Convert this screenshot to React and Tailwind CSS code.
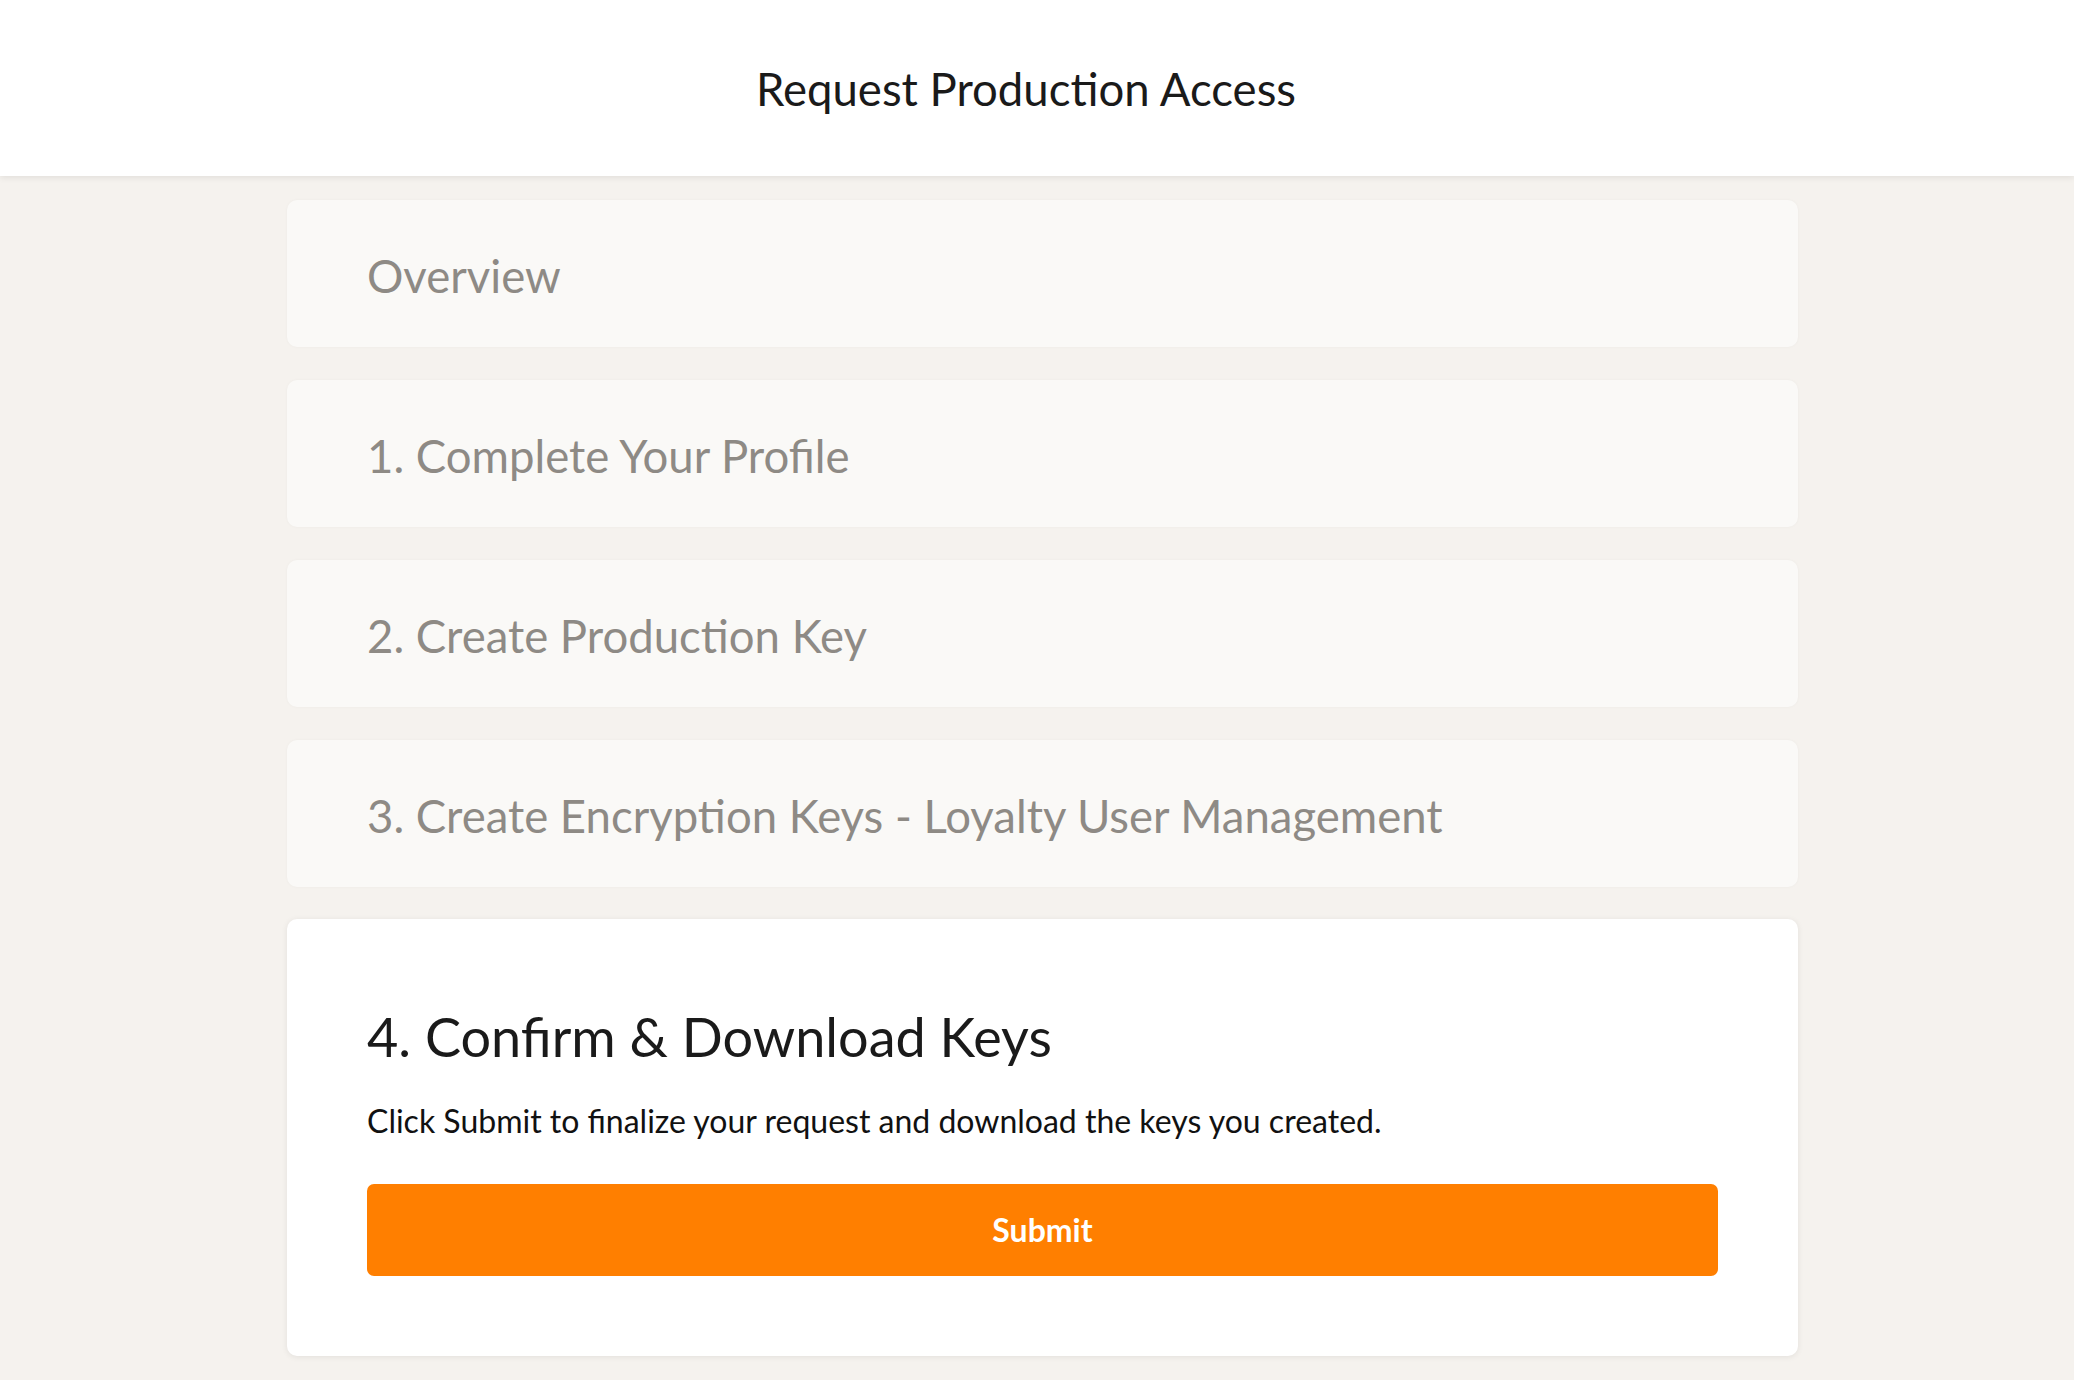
const steps = [
  "Overview",
  "1. Complete Your Profile",
  "2. Create Production Key",
  "3. Create Encryption Keys - Loyalty User Management",
];

export default function App() {
  return (
    <div className="min-h-[1380px] bg-[#f5f2ee] font-['Lato','Liberation_Sans',sans-serif]">
      <header className="h-[176px] bg-white flex items-center justify-center shadow-[0_2px_6px_rgba(0,0,0,0.08)] relative z-10">
        <h1 className="text-[45.5px] leading-none text-[#1a1a1a] mr-[22px] pt-[2px]">Request Production Access</h1>
      </header>

      <main className="ml-[287px] w-[1511px] pt-[24px] pb-[24px] flex flex-col gap-[33px]">
        {steps.map((step) => (
          <div
            key={step}
            className="h-[147px] rounded-[10px] bg-[#faf9f7] shadow-[0_0_3px_rgba(0,0,0,0.04)] flex items-center pl-[80px]"
          >
            <h2 className="text-[45.5px] leading-none text-[#8e8a85] pt-[5px]">{step}</h2>
          </div>
        ))}

        <div className="rounded-[10px] bg-white shadow-[0_1px_6px_rgba(0,0,0,0.08)] px-[80px] pt-[91px] pb-[80px] -mt-[1px]">
          <h2 className="text-[54px] leading-none text-[#1a1a1a]">4. Confirm &amp; Download Keys</h2>
          <p className="mt-[41px] text-[32px] leading-[32px] text-[#111111]">
            Click Submit to finalize your request and download the keys you created.
          </p>
          <button className="mt-[47px] w-full h-[92px] rounded-[7px] bg-[#ff7f00] text-white text-[32px] font-bold">
            Submit
          </button>
        </div>
      </main>
    </div>
  );
}
